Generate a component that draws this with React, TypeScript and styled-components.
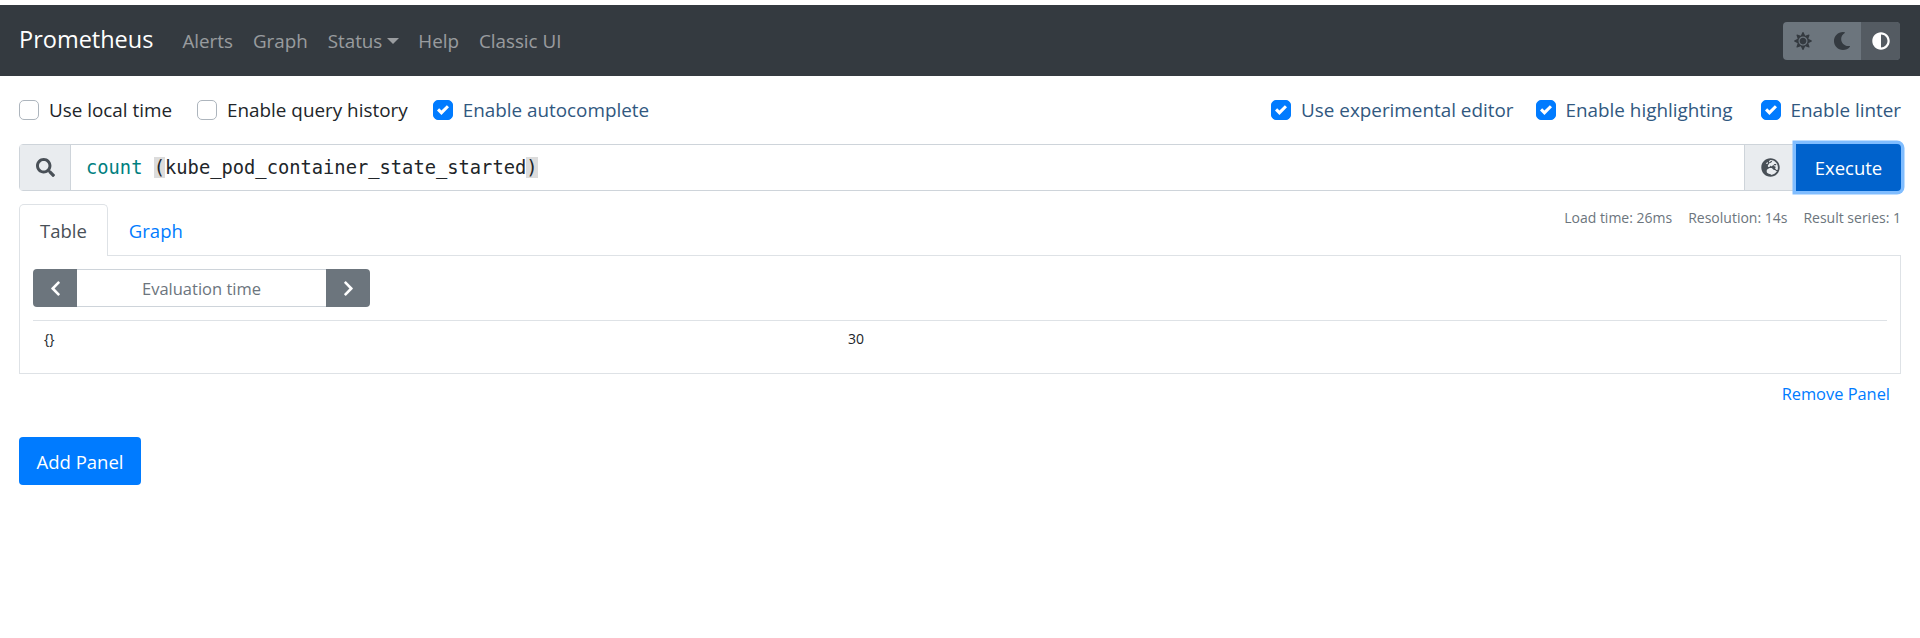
import React from "react";
import styled, { createGlobalStyle } from "styled-components";
import { FaSearch, FaGlobeEurope, FaSun, FaMoon, FaAdjust, FaChevronLeft, FaChevronRight } from "react-icons/fa";

const Global = createGlobalStyle`
  html, body { margin: 0; padding: 0; background: #fff; }
  body { font-family: "Open Sans", "Noto Sans", sans-serif; font-size: 18.5px; color: #212529; }
`;
const Page = styled.div`padding-top: 5px; height: 633px; overflow: hidden;`;
const Navbar = styled.nav`
  height: 71px; background: #343a40; display: flex; align-items: center;
  padding: 0 20px 0 19px; justify-content: space-between;
`;
const NavLeft = styled.div`display: flex; align-items: center;`;
const Brand = styled.a`color: #fff; font-size: 23.5px; margin-right: 29px; position: relative; top: -2px;`;
const NavLink = styled.a<{ $gap: number }>`color: rgba(255,255,255,.5); font-size: 18.8px; margin-right: ${p => p.$gap}px; display: flex; align-items: center;`;
const Caret = styled.span`
  display: inline-block; margin-left: 5px; border-top: 6px solid currentColor;
  border-left: 6px solid transparent; border-right: 6px solid transparent;
`;
const ThemeGroup = styled.div`display: flex; height: 38px; width: 117px; border-radius: 4px; overflow: hidden; background: #6c757d;`;
const ThemeButton = styled.div<{ $active?: boolean }>`
  flex: 1; display: flex; align-items: center; justify-content: center;
  background: ${p => (p.$active ? "#545b62" : "transparent")};
  color: ${p => (p.$active ? "#fff" : "#343a40")};
  font-size: 18px;
`;
const Content = styled.main`padding: 0 19px;`;
const OptionsRow = styled.div`display: flex; justify-content: space-between; margin-top: 24px; height: 20px; align-items: center;`;
const OptionGroup = styled.div`display: flex; align-items: center;`;
const Option = styled.label<{ $gap: number; $checked?: boolean }>`
  display: flex; align-items: center; margin-right: ${p => p.$gap}px; font-size: 18.87px;
  color: ${p => (p.$checked ? "#31587f" : "#212529")};
`;
const Box = styled.span<{ $checked?: boolean }>`
  width: 20px; height: 20px; border-radius: 5px; margin-right: 10px; box-sizing: border-box;
  display: flex; align-items: center; justify-content: center; color: #fff;
  background: ${p => (p.$checked ? "#007bff" : "#fff")};
  border: 1px solid ${p => (p.$checked ? "#007bff" : "#adb5bd")};
`;
const QueryBar = styled.div`
  display: flex; height: 47px; margin-top: 24px; box-sizing: border-box;
  border: 1px solid #ced4da; border-radius: 4px;
`;
const Addon = styled.div<{ $w: number; $side: "left" | "right" }>`
  width: ${p => p.$w}px; background: #e9ecef; display: flex; align-items: center; justify-content: center;
  color: #495057; font-size: 19px;
  border-${p => p.$side}: 1px solid #ced4da;
`;
const QueryText = styled.div`
  flex: 1; padding-left: 15px; display: flex; align-items: center; white-space: pre;
  font-family: "DejaVu Sans Mono", monospace; font-size: 18.75px; color: #212529;
`;
const Keyword = styled.span`color: #008080;`;
const Paren = styled.span`background: #dcdcdc;`;
const Execute = styled.button`
  width: 105px; margin: -1px -1px -1px 0; border: 0; border-radius: 0 4px 4px 0; background: #0062cc; color: #fff;
  font: inherit; box-shadow: 0 0 0 3.5px #80bdff; position: relative;
`;
const TabsRow = styled.div`display: flex; justify-content: space-between; margin-top: 13px; height: 51px;`;
const Tabs = styled.div`display: flex;`;
const Tab = styled.div<{ $active?: boolean }>`
  padding: 0 20px; box-sizing: border-box; display: flex; align-items: center; justify-content: center;
  border: 1px solid ${p => (p.$active ? "#dee2e6" : "transparent")}; border-bottom: 0;
  border-radius: 5px 5px 0 0; color: ${p => (p.$active ? "#495057" : "#007bff")};
  background: ${p => (p.$active ? "#fff" : "transparent")};
  position: relative; z-index: ${p => (p.$active ? 1 : 0)}; height: ${p => (p.$active ? 52 : 51)}px;
`;
const Stats = styled.div`display: flex; gap: 16px; font-size: 14px; color: #6c757d; padding-top: 4px;`;
const Panel = styled.section`
  border: 1px solid #dee2e6; height: 119px; box-sizing: border-box; padding: 13px 13px 0 13px;
`;
const EvalGroup = styled.div`display: flex; width: 337px; height: 38px;`;
const EvalButton = styled.div<{ $side: "l" | "r" }>`
  width: 44px; background: #6c757d; color: #fff; font-size: 17px; display: flex; align-items: center; justify-content: center;
  border-radius: ${p => (p.$side === "l" ? "4px 0 0 4px" : "0 4px 4px 0")};
`;
const EvalInput = styled.div`
  flex: 1; border: 1px solid #ced4da; border-width: 1px 0; box-sizing: border-box; display: flex; align-items: center;
  justify-content: center; color: #6c757d; font-size: 16.5px;
`;
const ResultRow = styled.div`
  margin-top: 13px; border-top: 1px solid #dee2e6; padding: 8px 0 0 11px; display: grid;
  grid-template-columns: 804px 1fr; font-size: 14px; color: #212529;
`;
const RemoveRow = styled.div`display: flex; justify-content: flex-end; margin-top: 8px; padding-right: 11px; color: #007bff; font-size: 16.4px;`;
const AddPanel = styled.button`
  display: block; margin-top: 32px; width: 122px; height: 48px; border: 0; border-radius: 4px; background: #007bff; color: #fff; font: inherit;
`;
const Check = () => (
  <svg width="12" height="12" viewBox="0 0 8 8"><path fill="#fff" d="M6.564.75l-3.59 3.612-1.538-1.55L0 4.26l2.974 2.99L8 2.193z" /></svg>
);
const Opt = ({ label, gap, checked }: { label: string; gap: number; checked?: boolean }) => (
  <Option $gap={gap} $checked={checked}>
    <Box $checked={checked}>{checked && <Check />}</Box>
    {label}
  </Option>
);

export default function App() {
  return (
    <Page>
      <Global />
      <Navbar>
        <NavLeft>
          <Brand>Prometheus</Brand>
          <NavLink $gap={20}>Alerts</NavLink>
          <NavLink $gap={20}>Graph</NavLink>
          <NavLink $gap={19}>Status<Caret /></NavLink>
          <NavLink $gap={20}>Help</NavLink>
          <NavLink $gap={0}>Classic UI</NavLink>
        </NavLeft>
        <ThemeGroup>
          <ThemeButton><FaSun /></ThemeButton>
          <ThemeButton><FaMoon /></ThemeButton>
          <ThemeButton $active><FaAdjust /></ThemeButton>
        </ThemeGroup>
      </Navbar>
      <Content>
        <OptionsRow>
          <OptionGroup>
            <Opt label="Use local time" gap={25} />
            <Opt label="Enable query history" gap={25} />
            <Opt label="Enable autocomplete" gap={0} checked />
          </OptionGroup>
          <OptionGroup>
            <Opt label="Use experimental editor" gap={22} checked />
            <Opt label="Enable highlighting" gap={28} checked />
            <Opt label="Enable linter" gap={0} checked />
          </OptionGroup>
        </OptionsRow>
        <QueryBar>
          <Addon $w={50} $side="right"><FaSearch /></Addon>
          <QueryText>
            <span><Keyword>count</Keyword>{" "}<Paren>(</Paren>kube_pod_container_state_started<Paren>)</Paren></span>
          </QueryText>
          <Addon $w={51} $side="left"><FaGlobeEurope /></Addon>
          <Execute>Execute</Execute>
        </QueryBar>
        <TabsRow>
          <Tabs>
            <Tab $active>Table</Tab>
            <Tab>Graph</Tab>
          </Tabs>
          <Stats>
            <span>Load time: 26ms</span>
            <span>Resolution: 14s</span>
            <span>Result series: 1</span>
          </Stats>
        </TabsRow>
        <Panel>
          <EvalGroup>
            <EvalButton $side="l"><FaChevronLeft /></EvalButton>
            <EvalInput>Evaluation time</EvalInput>
            <EvalButton $side="r"><FaChevronRight /></EvalButton>
          </EvalGroup>
          <ResultRow>
            <span>{"{}"}</span>
            <span>30</span>
          </ResultRow>
        </Panel>
        <RemoveRow>Remove Panel</RemoveRow>
        <AddPanel>Add Panel</AddPanel>
      </Content>
    </Page>
  );
}
